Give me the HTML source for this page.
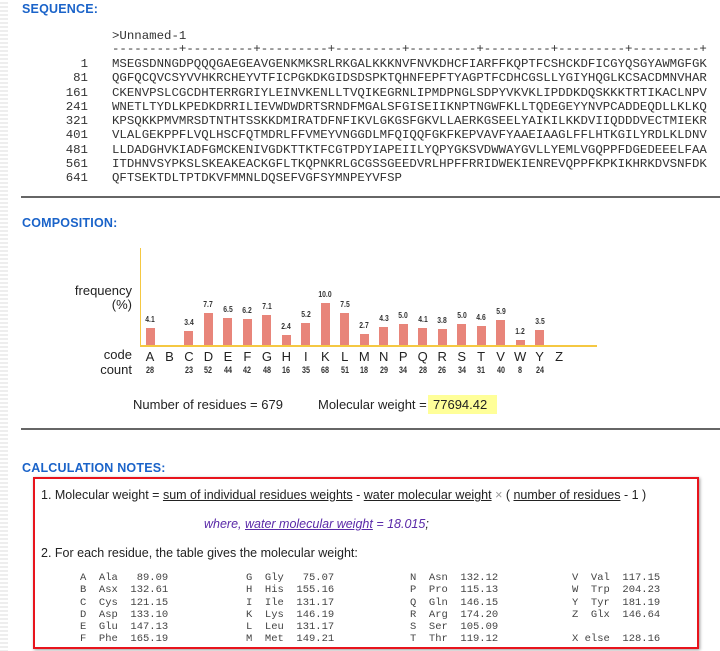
<!DOCTYPE html>
<html><head><meta charset="utf-8"><style>
*{margin:0;padding:0;box-sizing:border-box}
body{width:720px;height:651px;background:#fff;position:relative;overflow:hidden;font-family:"Liberation Sans",sans-serif;color:#222}
.a{position:absolute;white-space:pre}
.t{font-weight:bold;color:#1a63c9;font-size:12.5px;letter-spacing:0.2px}
.m{font-family:"Liberation Mono",monospace;font-size:12.4px;color:#333}
.hr{position:absolute;left:21px;right:0;height:2px;background:#666}
.bar{position:absolute;width:9px;background:#e8857a}
.v{position:absolute;font-size:8px;font-weight:bold;color:#333;width:20px;text-align:center;transform:scaleX(0.85)}
.c{position:absolute;font-size:13px;color:#222;width:20px;text-align:center}
.n{position:absolute;font-size:9px;font-weight:bold;color:#333;width:20px;text-align:center;transform:scaleX(0.8)}
.tb{position:absolute;font-family:"Liberation Mono",monospace;font-size:10.5px;color:#444;white-space:pre}
u{text-decoration:underline}
.stripe{position:absolute;left:0;top:0;width:8px;height:651px;background:repeating-linear-gradient(#fff 0 2px,#eee 2px 4px)}
</style></head><body>
<div class="stripe"></div>
<div class="a t" style="left:22px;top:2px">SEQUENCE:</div>
<div class="a m" style="left:112px;top:29px">&gt;Unnamed-1</div>
<div class="a m" style="left:112px;top:42px">---------+---------+---------+---------+---------+---------+---------+---------+</div>
<div class="a m" style="left:64px;top:57px;line-height:14.25px;text-align:right;width:24px">1
81
161
241
321
401
481
561
641</div>
<div class="a m" style="left:112px;top:57px;line-height:14.25px">MSEGSDNNGDPQQQGAEGEAVGENKMKSRLRKGALKKKNVFNVKDHCFIARFFKQPTFCSHCKDFICGYQSGYAWMGFGK
QGFQCQVCSYVVHKRCHEYVTFICPGKDKGIDSDSPKTQHNFEPFTYAGPTFCDHCGSLLYGIYHQGLKCSACDMNVHAR
CKENVPSLCGCDHTERRGRIYLEINVKENLLTVQIKEGRNLIPMDPNGLSDPYVKVKLIPDDKDQSKKKTRTIKACLNPV
WNETLTYDLKPEDKDRRILIEVWDWDRTSRNDFMGALSFGISEIIKNPTNGWFKLLTQDEGEYYNVPCADDEQDLLKLKQ
KPSQKKPMVMRSDTNTHTSSKKDMIRATDFNFIKVLGKGSFGKVLLAERKGSEELYAIKILKKDVIIQDDDVECTMIEKR
VLALGEKPPFLVQLHSCFQTMDRLFFVMEYVNGGDLMFQIQQFGKFKEPVAVFYAAEIAAGLFFLHTKGILYRDLKLDNV
LLDADGHVKIADFGMCKENIVGDKTTKTFCGTPDYIAPEIILYQPYGKSVDWWAYGVLLYEMLVGQPPFDGEDEEELFAA
ITDHNVSYPKSLSKEAKEACKGFLTKQPNKRLGCGSSGEEDVRLHPFFRRIDWEKIENREVQPPFKPKIKHRKDVSNFDK
QFTSEKTDLTPTDKVFMMNLDQSEFVGFSYMNPEYVFSP</div>
<div class="hr" style="top:196px"></div>
<div class="a t" style="left:22px;top:216px">COMPOSITION:</div>
<div style="position:absolute;left:140px;top:248px;width:1px;height:99px;background:#f5c842"></div>
<div style="position:absolute;left:140px;top:345px;width:457px;height:2px;background:#f5c842"></div>
<div class="a" style="right:588px;top:283px;font-size:13px;text-align:right">frequency</div>
<div class="a" style="right:588px;top:297px;font-size:13px">(%)</div>
<div class="a" style="right:588px;top:347px;font-size:13px">code</div>
<div class="a" style="right:588px;top:362px;font-size:13px">count</div>
<div id="ch"></div>
<script>
var L="ABCDEFGHIKLMNPQRSTVWYZ".split(""),P=[4.1,0,3.4,7.7,6.5,6.2,7.1,2.4,5.2,10.0,7.5,2.7,4.3,5.0,4.1,3.8,5.0,4.6,5.9,1.2,3.5,0],N=[28,"",23,52,44,42,48,16,35,68,51,18,29,34,28,26,34,31,40,8,24,""],h="";
for(var i=0;i<22;i++){var cx=150+i*19.48;if(P[i]>0){var ht=Math.round(P[i]*4.2);h+='<div class="bar" style="left:'+(cx-4.5)+'px;top:'+(345-ht)+'px;height:'+ht+'px"></div><div class="v" style="left:'+(cx-10)+'px;top:'+(345-ht-13)+'px">'+P[i].toFixed(1)+'</div>';}
h+='<div class="c" style="left:'+(cx-10)+'px;top:349px">'+L[i]+'</div><div class="n" style="left:'+(cx-10)+'px;top:365px">'+N[i]+'</div>';}
document.getElementById("ch").innerHTML=h;
</script>
<div class="a" style="left:133px;top:397px;font-size:13px">Number of residues = 679</div>
<div class="a" style="left:318px;top:397px;font-size:13px">Molecular weight = </div>
<div style="position:absolute;left:428px;top:395px;width:69px;height:19px;background:#ffff99"></div>
<div class="a" style="left:433px;top:397px;font-size:13px">77694.42</div>
<div class="hr" style="top:428px"></div>
<div class="a t" style="left:22px;top:461px">CALCULATION NOTES:</div>
<div style="position:absolute;left:33px;top:477px;width:666px;height:172px;border:2px solid #e8141c;box-shadow:1px 1px 3px #999"></div>
<div class="a" style="left:41px;top:488px;font-size:12.5px">1. Molecular weight = <u>sum of individual residues weights</u> - <u>water molecular weight</u> <span style="color:#999">×</span> ( <u>number of residues</u> - 1 )</div>
<div class="a" style="left:204px;top:517px;font-size:12.5px;font-style:italic;color:#5a2aa8">where, <u>water molecular weight</u> = 18.015<span style="color:#222">;</span></div>
<div class="a" style="left:41px;top:546px;font-size:12.5px">2. For each residue, the table gives the molecular weight:</div>
<div class="tb" style="left:80px;top:572px;line-height:12.3px">A  Ala   89.09
B  Asx  132.61
C  Cys  121.15
D  Asp  133.10
E  Glu  147.13
F  Phe  165.19</div>
<div class="tb" style="left:246px;top:572px;line-height:12.3px">G  Gly   75.07
H  His  155.16
I  Ile  131.17
K  Lys  146.19
L  Leu  131.17
M  Met  149.21</div>
<div class="tb" style="left:410px;top:572px;line-height:12.3px">N  Asn  132.12
P  Pro  115.13
Q  Gln  146.15
R  Arg  174.20
S  Ser  105.09
T  Thr  119.12</div>
<div class="tb" style="left:572px;top:572px;line-height:12.3px">V  Val  117.15
W  Trp  204.23
Y  Tyr  181.19
Z  Glx  146.64

X else  128.16</div>
</body></html>
